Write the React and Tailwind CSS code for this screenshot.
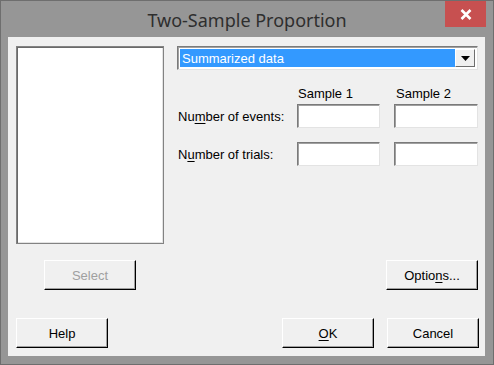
import React from "react";

function Btn({ children, disabled, className = "" }) {
  return (
    <div
      className={
        "w-[92px] h-[30px] flex items-center justify-center bg-[#f0f0f0] border border-t-white border-l-white border-r-[#000000] border-b-[#000000] shadow-[inset_-1px_-1px_0_#a0a0a0] " +
        (disabled ? "text-[#a0a0a0] " : "text-[#000000] ") +
        className
      }
    >
      {children}
    </div>
  );
}

function TextBox({ className = "" }) {
  return (
    <div
      className={
        "h-[24px] bg-white border border-t-[#7a7a7a] border-l-[#7a7a7a] border-r-[#e3e3e3] border-b-[#e3e3e3] shadow-[inset_1px_1px_0_#a0a0a0] " +
        className
      }
    />
  );
}

export default function App() {
  return (
    <div className="w-[494px] h-[365px] bg-[#969696] border border-[#6e6e6e] flex flex-col font-['Liberation_Sans',Arial,sans-serif] text-[13px] leading-none">
      <div className="relative h-[36px] flex items-center justify-center shrink-0">
        <span className="font-['Noto_Sans',sans-serif] text-[18px] text-[#2e2e2e] mt-[1px]">
          Two-Sample Proportion
        </span>
        <div className="absolute top-0 right-[7px] w-[41px] h-[26px] bg-[#c75050] flex items-center justify-center">
          <svg width="12" height="11" viewBox="0 0 12 11">
            <path d="M1.5 1 L10.5 10 M10.5 1 L1.5 10" stroke="white" strokeWidth="2.6" />
          </svg>
        </div>
      </div>
      <div className="ml-[7px] w-[477px] h-[319px] bg-[#f0f0f0] flex flex-col">
        <div className="flex pt-[9px] pl-[8px]">
          <div className="w-[148px] h-[198px] bg-white border border-[#828282] shadow-[inset_1px_1px_0_#696969,inset_-1px_-1px_0_#e3e3e3]" />
          <div className="ml-[13px] w-[301px] flex flex-col">
            <div className="h-[24px] border border-t-[#7a7a7a] border-l-[#7a7a7a] border-r-[#e3e3e3] border-b-[#e3e3e3] shadow-[inset_1px_1px_0_#a0a0a0] bg-white flex p-[2px]">
              <div className="flex-1 bg-[#3399ff] text-white flex items-center pl-[2px] text-[13px]">
                Summarized data
              </div>
              <div className="w-[20px] bg-[#f0f0f0] border border-t-white border-l-white border-r-[#6e6e6e] border-b-[#6e6e6e] flex items-center justify-center">
                <svg width="9" height="5" viewBox="0 0 9 5">
                  <path d="M0 0 H9 L4.5 5 Z" fill="#000" />
                </svg>
              </div>
            </div>
            <div className="flex mt-[17px] h-[13px] items-end">
              <span className="ml-[121px] w-[98px]">Sample 1</span>
              <span>Sample 2</span>
            </div>
            <div className="flex items-center mt-[4px]">
              <span className="w-[120px] pl-[1px]">
                Nu<span className="underline underline-offset-2">m</span>ber of events:
              </span>
              <TextBox className="w-[83px]" />
              <TextBox className="w-[84px] ml-[14px]" />
            </div>
            <div className="flex items-center mt-[14px]">
              <span className="w-[120px] pl-[1px]">
                N<span className="underline underline-offset-2">u</span>mber of trials:
              </span>
              <TextBox className="w-[83px]" />
              <TextBox className="w-[84px] ml-[14px]" />
            </div>
          </div>
        </div>
        <div className="flex justify-between mt-[16px] pl-[36px] pr-[7px]">
          <Btn disabled>Select</Btn>
          <Btn>
            Optio<span className="underline underline-offset-2">n</span>s...
          </Btn>
        </div>
        <div className="flex mt-[28px] pl-[8px]">
          <Btn>Help</Btn>
          <Btn className="ml-[174px]">
            <span className="underline underline-offset-2">O</span>K
          </Btn>
          <Btn className="ml-[13px]">Cancel</Btn>
        </div>
      </div>
    </div>
  );
}
